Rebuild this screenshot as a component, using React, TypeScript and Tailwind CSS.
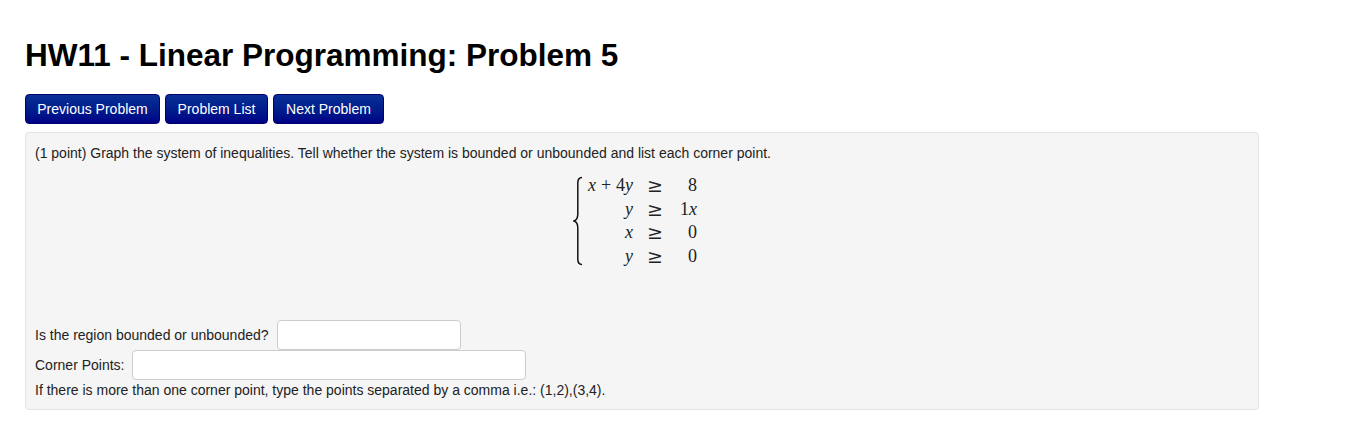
import React from "react";

function Brace() {
  return (
    <svg width="10" height="90" viewBox="0 0 10 90" className="block">
      <path
        d="M9 1.5 C5.5 1.5 4.8 3.5 4.8 7 L4.8 38 C4.8 42 3.5 44.2 1 45 C3.5 45.8 4.8 48 4.8 52 L4.8 83 C4.8 86.5 5.5 88.5 9 88.5"
        fill="none"
        stroke="#111"
        strokeWidth="1.5"
      />
    </svg>
  );
}

const V = ({ children }: { children: React.ReactNode }) => (
  <span className="italic">{children}</span>
);

export default function App() {
  const rows: [React.ReactNode, React.ReactNode][] = [
    [
      <>
        <V>x</V>
        <span className="mx-[5px]">+</span>4<V>y</V>
      </>,
      "8",
    ],
    [<V>y</V>, <>1<V>x</V></>],
    [<V>x</V>, "0"],
    [<V>y</V>, "0"],
  ];
  const buttons: [string, string][] = [
    ["Previous Problem", "w-[135px]"],
    ["Problem List", "w-[103px]"],
    ["Next Problem", "w-[111px]"],
  ];
  return (
    <div
      className="min-h-[425px] bg-white pl-[25px] pt-[35px] text-[#222]"
      style={{ fontFamily: '"Liberation Sans", Arial, sans-serif' }}
    >
      <h2 className="m-0 text-[31.5px] font-bold leading-[40px] text-black">
        HW11 - Linear Programming: Problem 5
      </h2>
      <div className="mt-[19px] flex gap-[5px]">
        {buttons.map(([t, w]) => (
          <button
            key={t}
            className={
              "h-[30px] rounded-[4px] border border-[#00006a] bg-gradient-to-b from-[#0b2f94] to-[#000086] text-center text-[14px] leading-[20px] text-white " +
              w
            }
          >
            {t}
          </button>
        ))}
      </div>
      <div className="mt-[8px] w-[1234px] rounded-[4px] border border-[#e3e3e3] bg-[#f5f5f5] px-[9px] pb-[9px] pt-[10px] text-[14px] leading-[20px]">
        <div>
          (1 point) Graph the system of inequalities. Tell whether the system is
          bounded or unbounded and list each corner point.
        </div>
        <div className="mt-[11px] flex justify-center pr-[14px]">
          <div
            className="flex items-stretch"
            style={{ fontFamily: '"Liberation Serif", "Times New Roman", serif' }}
          >
            <div className="mr-[5px] flex items-center">
              <Brace />
            </div>
            <div className="grid grid-cols-[auto_auto_auto] text-[18px] leading-[23.5px]">
              {rows.map(([l, r], i) => (
                <React.Fragment key={i}>
                  <div className="text-right">{l}</div>
                  <div
                    className="px-[14px] text-center text-[19px]"
                    style={{ fontFamily: '"DejaVu Serif", serif' }}
                  >
                    ≥
                  </div>
                  <div className="min-w-[20px] text-right">{r}</div>
                </React.Fragment>
              ))}
            </div>
          </div>
        </div>
        <div className="mt-[52px] flex items-center gap-[8px]">
          <span>Is the region bounded or unbounded?</span>
          <input
            type="text"
            className="h-[30px] w-[184px] rounded-[4px] border border-[#cccccc] bg-white"
          />
        </div>
        <div className="flex items-center gap-[8px]">
          <span>Corner Points:</span>
          <input
            type="text"
            className="h-[30px] w-[394px] rounded-[4px] border border-[#cccccc] bg-white"
          />
        </div>
        <div>
          If there is more than one corner point, type the points separated by a
          comma i.e.: (1,2),(3,4).
        </div>
      </div>
    </div>
  );
}
